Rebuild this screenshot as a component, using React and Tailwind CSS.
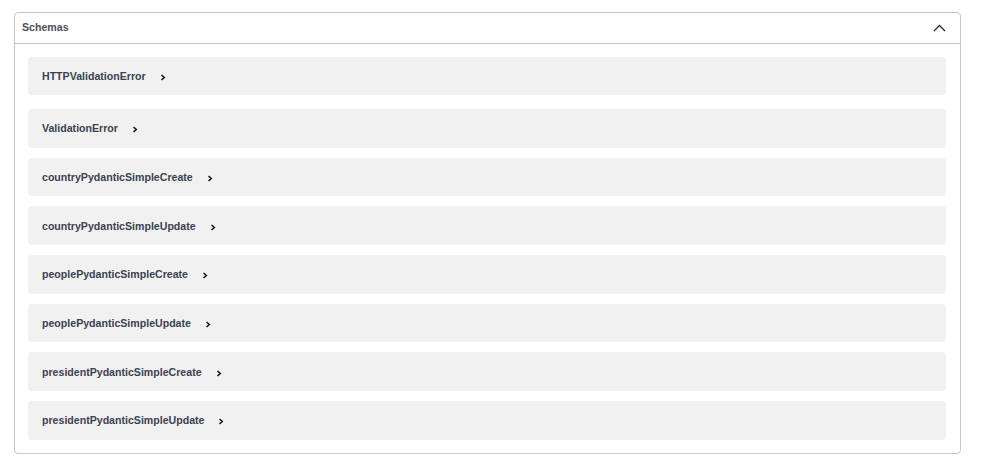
import React from 'react';

const schemas = [
  'HTTPValidationError',
  'ValidationError',
  'countryPydanticSimpleCreate',
  'countryPydanticSimpleUpdate',
  'peoplePydanticSimpleCreate',
  'peoplePydanticSimpleUpdate',
  'presidentPydanticSimpleCreate',
  'presidentPydanticSimpleUpdate',
];

function ArrowRight() {
  return (
    <svg width="6" height="7" viewBox="0 0 6 7" className="ml-[14px] mt-[3px] shrink-0">
      <polyline points="1.5,1 4.3,3.5 1.5,6" fill="none" stroke="#1a1a1a" strokeWidth="1.6" />
    </svg>
  );
}

function ArrowUp() {
  return (
    <svg width="13" height="8" viewBox="0 0 13 8">
      <polyline points="1,7 6.5,1.5 12,7" fill="none" stroke="#2b2b2b" strokeWidth="1.3" />
    </svg>
  );
}

function App() {
  return (
    <div className="w-[989px] h-[465px] bg-white pt-[12px] pl-[14px]" style={{ fontFamily: '"Liberation Sans", Arial, sans-serif' }}>
      <section className="w-[947px] border border-[#c4c6cb] rounded-[4px]">
        <div className="h-[31px] flex items-center justify-between pl-[7px] pr-[14px] border-b border-[#c4c6cb]">
          <h4 className="text-[10.6px] font-bold text-[#4a4f5c]">Schemas</h4>
          <ArrowUp />
        </div>
        <div className="pt-[13px] pb-[13px] pl-[13px] pr-[14px]">
          {schemas.map((name, i) => (
            <div
              key={name}
              className={`flex items-center pl-[14px] rounded-[4px] bg-[#f1f1f1] ${
                i === 0 ? 'h-[38px] mb-[14px]' : i === schemas.length - 1 ? 'h-[38.67px]' : 'h-[38.67px] mb-[10px]'
              }`}
            >
              <span className="text-[10.6px] font-bold text-[#3b4151] pt-[2px]">{name}</span>
              <ArrowRight />
            </div>
          ))}
        </div>
      </section>
    </div>
  );
}

export default App;
